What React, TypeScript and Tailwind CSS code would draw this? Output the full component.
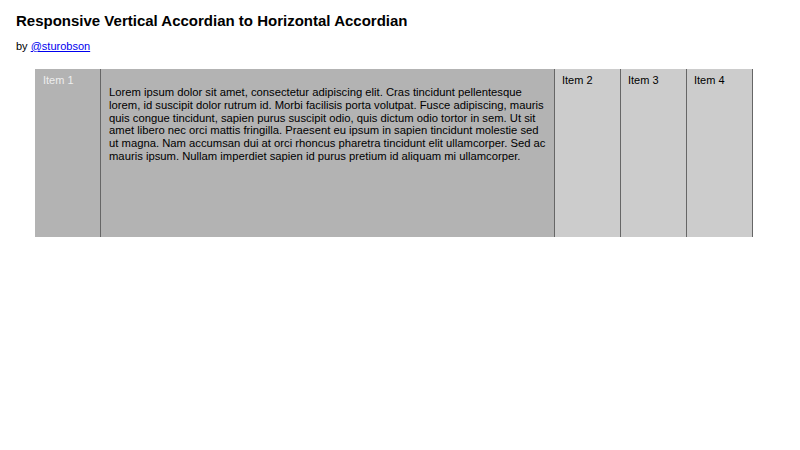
import React from "react";

const lorem =
  "Lorem ipsum dolor sit amet, consectetur adipiscing elit. Cras tincidunt pellentesque lorem, id suscipit dolor rutrum id. Morbi facilisis porta volutpat. Fusce adipiscing, mauris quis congue tincidunt, sapien purus suscipit odio, quis dictum odio tortor in sem. Ut sit amet libero nec orci mattis fringilla. Praesent eu ipsum in sapien tincidunt molestie sed ut magna. Nam accumsan dui at orci rhoncus pharetra tincidunt elit ullamcorper. Sed ac mauris ipsum. Nullam imperdiet sapien id purus pretium id aliquam mi ullamcorper.";

export default function App() {
  return (
    <div
      className="w-[800px] h-[450px] bg-white text-black overflow-hidden"
      style={{ fontFamily: '"Liberation Sans", Arial, sans-serif' }}
    >
      <div className="pl-[16px] pt-[12px]">
        <h1 className="text-[15px] leading-[18px] font-bold">
          Responsive Vertical Accordian to Horizontal Accordian
        </h1>
        <p className="text-[11px] leading-[13px] mt-[10px]">
          by{" "}
          <a href="#" className="text-[#0000ee] underline">
            @sturobson
          </a>
        </p>
      </div>
      <div className="ml-[35px] mt-[16px] w-[718px] h-[168px] flex">
        <div className="w-[66px] h-full bg-[#b3b3b3] border-r border-[#666666] px-[8px] pt-[5px] text-[11px] leading-[13px] text-[#eeeeee]">
          Item 1
        </div>
        <div className="w-[453px] h-full bg-[#b3b3b3] px-[8px] pt-[17px] text-[11.25px] leading-[12.8px] text-black">
          {lorem}
        </div>
        {["Item 2", "Item 3", "Item 4"].map((t) => (
          <div
            key={t}
            className="w-[66px] h-full bg-[#cccccc] border-l border-[#666666] px-[7px] pt-[5px] text-[11px] leading-[13px] text-black"
          >
            {t}
          </div>
        ))}
        <div className="w-px h-full bg-[#666666]" />
      </div>
    </div>
  );
}
